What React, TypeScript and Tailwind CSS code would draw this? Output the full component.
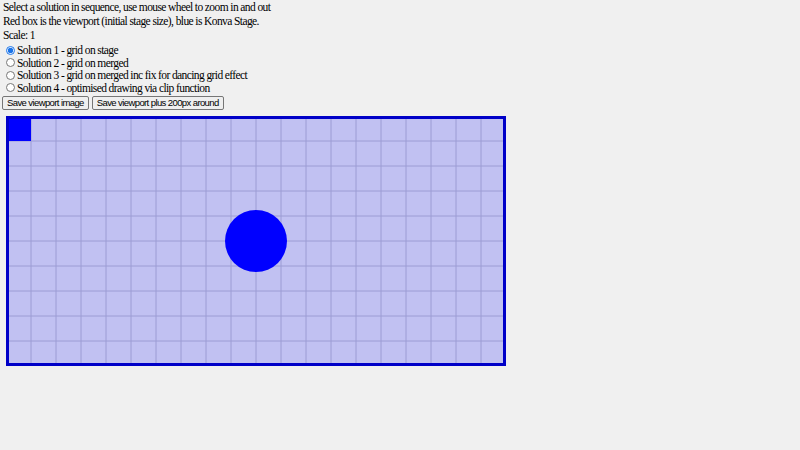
import React, { useState } from 'react';

const options = [
  'Solution 1 - grid on stage',
  'Solution 2 - grid on merged',
  'Solution 3 - grid on merged inc fix for dancing grid effect',
  'Solution 4 - optimised drawing via clip function',
];

const Stage: React.FC = () => {
  const cols = Array.from({ length: 19 }, (_, i) => (i + 1) * 25);
  const rows = Array.from({ length: 9 }, (_, i) => (i + 1) * 25);
  return (
    <svg width="500" height="250" viewBox="0 0 500 250" className="block">
      <rect x="0" y="0" width="500" height="250" fill="#c1c1f2" />
      {cols.map((x) => (
        <line key={'c' + x} x1={x} y1="0" x2={x} y2="250" stroke="#9c9cd4" strokeWidth="1" />
      ))}
      {rows.map((y) => (
        <line key={'r' + y} x1="0" y1={y} x2="500" y2={y} stroke="#9c9cd4" strokeWidth="1" />
      ))}
      <rect x="0" y="0" width="25" height="25" fill="#0000ff" />
      <circle cx="250" cy="125" r="31" fill="#0000ff" />
      <rect x="1.5" y="1.5" width="497" height="247" fill="none" stroke="#0000c8" strokeWidth="3" />
    </svg>
  );
};

export default function App() {
  const [selected, setSelected] = useState(0);

  return (
    <div className="min-h-[450px] w-full bg-[#f0f0f0] text-black font-['Liberation_Serif','Times_New_Roman',serif] text-[11.5px] leading-[14px] tracking-[-0.6px] pl-[3px]">
      <div>Select a solution in sequence, use mouse wheel to zoom in and out</div>
      <div>Red box is the viewport (initial stage size), blue is Konva Stage.</div>
      <div>Scale: 1</div>
      <div className="mt-[2px] flex flex-col">
        {options.map((label, i) => (
          <label key={label} className="flex items-center h-[12.5px] whitespace-nowrap">
            <input
              type="radio"
              name="solution"
              checked={selected === i}
              onChange={() => setSelected(i)}
              className="w-[9px] h-[9px] m-0 ml-[3px] mr-[2px] accent-[#1a73e8]"
            />
            {label}
          </label>
        ))}
      </div>
      <div className="flex gap-[3px] mt-[2px] -ml-[1px]">
        <button className="h-[14px] px-[4px] border border-[#767676] rounded-[2px] bg-[#efefef] font-['Liberation_Sans',Arial,sans-serif] text-[9.5px] leading-[12px] tracking-[-0.6px]">
          Save viewport image
        </button>
        <button className="h-[14px] px-[4px] border border-[#767676] rounded-[2px] bg-[#efefef] font-['Liberation_Sans',Arial,sans-serif] text-[9.5px] leading-[12px] tracking-[-0.6px]">
          Save viewport plus 200px around
        </button>
      </div>
      <div className="mt-[6px] ml-[3px]">
        <Stage />
      </div>
    </div>
  );
}
